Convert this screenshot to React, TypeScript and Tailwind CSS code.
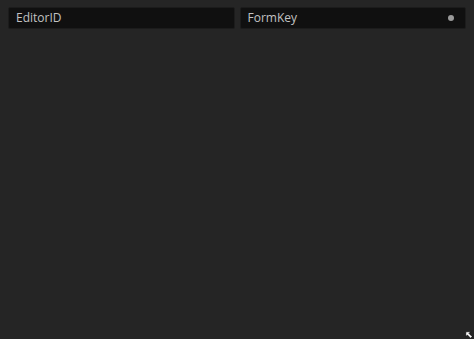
export default function App() {
  return (
    <div
      className="flex h-[339px] w-[474px] flex-col bg-[#252525] p-2 pt-[7px]"
      style={{ fontFamily: '"Open Sans", "Noto Sans", sans-serif' }}
    >
      <div className="flex gap-[5px]">
        <div className="flex h-[22px] flex-1 items-center rounded-[2px] border border-[#1c1c1c] bg-[#101010] px-[7px]">
          <span className="text-[12px] text-[#c2c2c2]">EditorID</span>
        </div>
        <div className="flex h-[22px] flex-1 items-center justify-between rounded-[2px] border border-[#1c1c1c] bg-[#101010] px-[7px]">
          <span className="text-[12px] text-[#c2c2c2]">FormKey</span>
          <span className="mr-[4px] h-[6px] w-[6px] rounded-full bg-[#9a9a9a]" />
        </div>
      </div>
      <div className="flex-1" />
      <div className="-mb-[8px] -mr-[8px] flex justify-end">
        <svg width="8" height="8" viewBox="0 0 10 10" className="mr-[1px]">
          <path d="M1 1 L7 1 L5 3 L9 7 L7 9 L3 5 L1 7 Z" fill="#ffffff" stroke="#000" strokeWidth="0.8" />
        </svg>
      </div>
    </div>
  );
}
